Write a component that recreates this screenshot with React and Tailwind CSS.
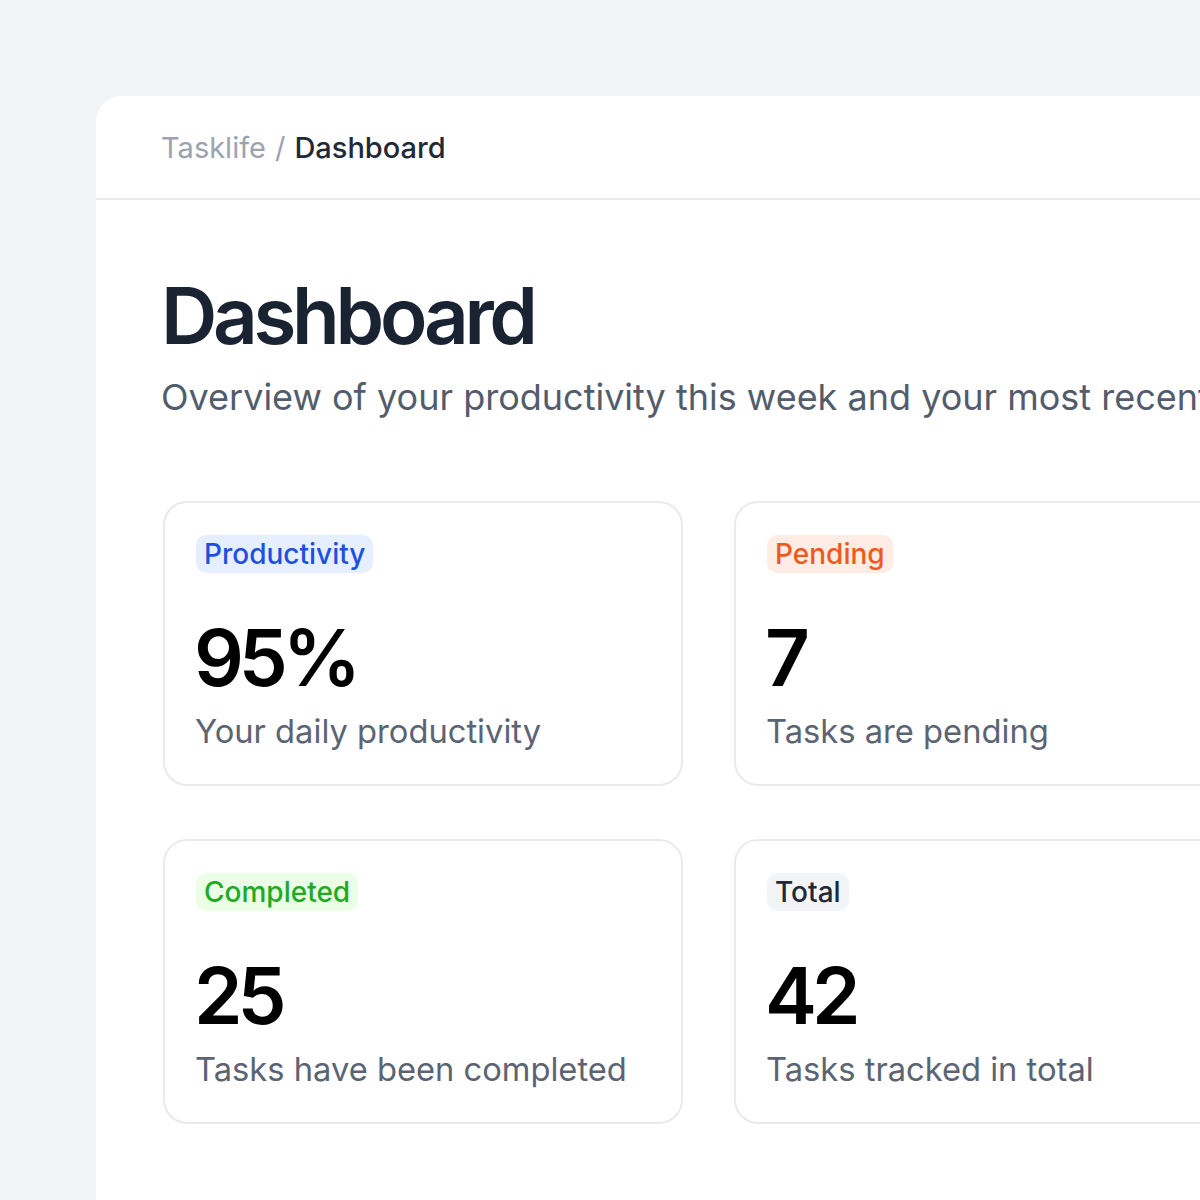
export default function App() {
  const cards = [
    { badge: "Productivity", badgeCls: "bg-[#e5efff] text-[#1f4fe0]", value: "95%", desc: "Your daily productivity" },
    { badge: "Pending", badgeCls: "bg-[#ffede5] text-[#ee5a1c]", value: "7", desc: "Tasks are pending" },
    { badge: "Completed", badgeCls: "bg-[#eaffe6] text-[#1faa1f]", value: "25", desc: "Tasks have been completed" },
    { badge: "Total", badgeCls: "bg-[#f3f4f6] text-[#1f2937]", value: "42", desc: "Tasks tracked in total" },
  ];
  return (
    <div className="min-h-[1200px] w-[1200px] overflow-hidden bg-[#f3f4f6] pl-[96px] pt-[96px]" style={{ fontFamily: "Inter, 'Noto Sans', sans-serif" }}>
      <div className="min-h-[1104px] w-[1300px] rounded-tl-[26px] bg-white">
        <div className="flex h-[104px] items-center border-b-2 border-[#e8eaee] px-[65px] pt-[1px] text-[29px] leading-none">
          <span className="text-[#9ca3af]">Tasklife</span>
          <span className="mx-[9px] text-[#9ca3af]">/</span>
          <span className="font-medium text-[#1f2937]">Dashboard</span>
        </div>
        <div className="px-[65px] pt-[77px]">
          <h1 className="text-[78px] font-semibold leading-none tracking-[-0.055em] text-[#1a2332]">Dashboard</h1>
          <p className="mt-[17px] whitespace-nowrap text-[36px] leading-[50px] text-[#535c6b]">
            Overview of your productivity this week and your most recent tasks.
          </p>
          <div className="ml-[2px] mt-[79px] grid grid-cols-[520px_520px] gap-x-[51px] gap-y-[53px]">
            {cards.map((c) => (
              <div key={c.badge} className="h-[285px] rounded-[24px] border-2 border-[#e8eaee] px-[31px] pt-[32px]">
                <span className={`inline-flex h-[38px] items-center rounded-[10px] px-[8px] text-[28px] font-medium leading-none ${c.badgeCls}`}>
                  {c.badge}
                </span>
                <div className="-ml-[2px] mt-[46px] text-[78px] font-semibold leading-none tracking-[-0.065em] text-black">{c.value}</div>
                <div className="-ml-[1px] mt-[14px] text-[32.7px] leading-[40px] text-[#5b6473]">{c.desc}</div>
              </div>
            ))}
          </div>
        </div>
      </div>
    </div>
  );
}
